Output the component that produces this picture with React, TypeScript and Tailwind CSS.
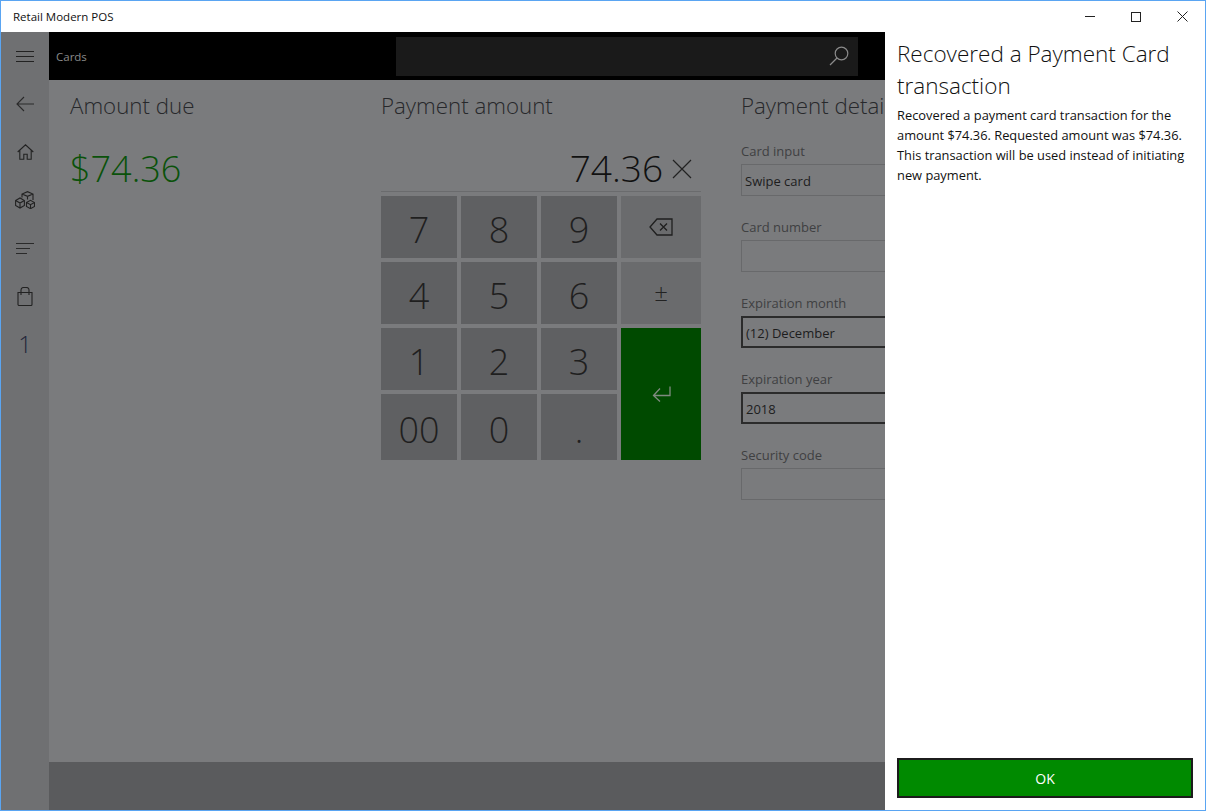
const FONT = "font-['Open_Sans','Noto_Sans',sans-serif]"

function HamburgerIcon() {
  return (
    <svg width="18" height="11" viewBox="0 0 18 11" fill="none" stroke="#222" strokeWidth="1">
      <path d="M0 0.500h18M0 5.500h18M0 10.500h18" />
    </svg>
  )
}

function BackIcon() {
  return (
    <svg width="18" height="16" viewBox="0 0 18 16" fill="none" stroke="#2a2a2a" strokeWidth="1.1">
      <path d="M18 8H1M8 1L1 8l7 7" />
    </svg>
  )
}

function HomeIcon() {
  return (
    <svg width="17" height="16" viewBox="0 0 17 16" fill="none" stroke="#222" strokeWidth="1.1">
      <path d="M0.700 8L8.500 0.800 16.300 8M2.800 6.300v9h4v-5h3.400v5h4v-9" />
    </svg>
  )
}

function BoxesIcon() {
  return (
    <svg width="20" height="18" viewBox="0 0 20 18" fill="none" stroke="#222" strokeWidth="1.1">
      {/* back cube */}
      <path d="M7 6.500V3l5.500-2.300L18 3v6M7 3l5.500 2.300L18 3M12.500 5.300V8.500" />
      {/* left cube */}
      <path d="M0.600 9.500L5 7l4.400 2.500v5L5 17l-4.400-2.500zM0.600 9.500L5 12l4.400-2.500M5 12v5" />
      {/* right cube */}
      <path d="M11.500 11.500l4-2.200 4 2.200v4l-4 2.200-4-2.200zM11.500 11.500l4 2.200 4-2.200M15.500 13.700v4" />
    </svg>
  )
}

function LinesIcon() {
  return (
    <svg width="18" height="11" viewBox="0 0 18 11" fill="none" stroke="#2a2a2a" strokeWidth="1">
      <path d="M0 0.500h18M0 5.500h14M0 10.500h11" />
    </svg>
  )
}

function BagIcon() {
  return (
    <svg width="16" height="19" viewBox="0 0 16 19" fill="none" stroke="#222" strokeWidth="1.1">
      <path d="M1 5.500h14v12a1 1 0 0 1-1 1H2a1 1 0 0 1-1-1zM4 8V3a2.500 2.500 0 0 1 2.500-2.500h3A2.500 2.500 0 0 1 12 3v5" />
    </svg>
  )
}

function SearchIcon() {
  return (
    <svg width="20" height="20" viewBox="0 0 20 20" fill="none" stroke="#8b8b8b" strokeWidth="1.2">
      <circle cx="12.500" cy="7.500" r="6.300" />
      <path d="M8 12L1 19" />
    </svg>
  )
}

function BackspaceIcon() {
  return (
    <svg width="24" height="18" viewBox="0 0 24 18" fill="none" stroke="#1f1f1f" strokeWidth="1.3">
      <path d="M23 1H8L1 9l7 8h15zM11 5.500l7 7M18 5.500l-7 7" />
    </svg>
  )
}

function EnterIcon() {
  return (
    <svg width="19" height="16" viewBox="0 0 19 16" fill="none" stroke="#7f8a7f" strokeWidth="1.3">
      <path d="M18 0.500V9.500H1.500M8 2.500L1.500 9.500 8 15.500" />
    </svg>
  )
}

function Field({ label, value, strong }: { label: string; value?: string; strong?: boolean }) {
  return (
    <div className="h-[76px] shrink-0">
      <div className="h-[24px] pt-[2px] text-[13px] leading-[18px] text-[#3f4042]">{label}</div>
      <div
        className={`flex h-[32px] w-[320px] items-center px-[3px] pt-[4px] text-[13px] text-[#1d1d1d] ${
          strong ? "border-2 border-[#2b2b2b]" : "border border-[#68696b]"
        }`}
      >
        {value}
      </div>
    </div>
  )
}

function Key({ label }: { label: string }) {
  return (
    <div className="flex items-center justify-center bg-[#5f6062] pt-[6px] text-[36px] font-light leading-none text-[#1f1f1f]">
      {label}
    </div>
  )
}

export default function App() {
  return (
    <div className={`${FONT} flex h-[811px] w-[1206px] flex-col overflow-hidden border border-[#5aa5f2] bg-white`}>
      {/* title bar */}
      <div className="flex h-[31px] shrink-0 items-center justify-between bg-white">
        <span className="pl-[12px] text-[11.500px] text-[#111]">Retail Modern POS</span>
        <div className="flex items-center">
          <div className="flex h-[31px] w-[46px] items-center justify-center">
            <div className="h-px w-[10px] bg-[#222]" />
          </div>
          <div className="flex h-[31px] w-[46px] items-center justify-center">
            <div className="h-[10px] w-[10px] border border-[#222]" />
          </div>
          <div className="flex h-[31px] w-[46px] items-center justify-center">
            <svg width="11" height="11" viewBox="0 0 11 11" stroke="#222" strokeWidth="1">
              <path d="M0.500 0.500l10 10M10.500 0.500l-10 10" />
            </svg>
          </div>
        </div>
      </div>

      <div className="flex min-h-0 flex-1">
        {/* nav rail */}
        <div className="flex w-[48px] shrink-0 flex-col items-center bg-[#6f7072]">
          <div className="flex h-[48px] items-center justify-center"><HamburgerIcon /></div>
          <div className="flex h-[48px] items-center justify-center"><BackIcon /></div>
          <div className="flex h-[48px] items-center justify-center"><HomeIcon /></div>
          <div className="flex h-[48px] items-center justify-center"><BoxesIcon /></div>
          <div className="flex h-[48px] items-center justify-center"><LinesIcon /></div>
          <div className="flex h-[48px] items-center justify-center"><BagIcon /></div>
          <div className="flex h-[48px] items-center justify-center text-[24px] font-light text-[#23263a]">1</div>
        </div>

        {/* main */}
        <div className="flex w-[836px] shrink-0 flex-col overflow-hidden bg-[#7a7b7d]">
          <div className="flex h-[48px] shrink-0 items-center bg-black">
            <span className="w-[347px] pl-[7px] pt-[2px] text-[11.500px] text-[#8a8a8a]">Cards</span>
            <div className="flex h-[39px] w-[462px] items-center justify-end bg-[#1a1a1a] pr-[9px]">
              <SearchIcon />
            </div>
          </div>

          <div className="flex min-h-0 flex-1 pl-[21px]">
            <div className="w-[311px] shrink-0">
              <div className="pt-[8px] text-[22.300px] font-light leading-[36px] text-[#27282b]">Amount due</div>
              <div className="pt-[20px] text-[36px] font-light leading-[50px] text-[#0a520a]">$74.36</div>
            </div>

            <div className="w-[360px] shrink-0">
              <div className="pt-[8px] text-[22.300px] font-light leading-[36px] text-[#27282b]">Payment amount</div>
              <div className="flex h-[68px] w-[320px] items-end justify-end border-b border-[#6a6b6d] pb-[2px] pr-[9px]">
                <span className="text-[37px] font-light leading-[42px] text-[#111]">74.36</span>
                <svg className="mb-[10px] ml-[9px]" width="20" height="20" viewBox="0 0 20 20" stroke="#222" strokeWidth="1.2">
                  <path d="M1 1l18 18M19 1L1 19" />
                </svg>
              </div>
              <div className="mt-[4px] grid w-[320px] grid-cols-[76px_76px_76px_80px] grid-rows-[62px_62px_62px_66px] gap-[4px]">
                <Key label="7" />
                <Key label="8" />
                <Key label="9" />
                <div className="flex items-center justify-center bg-[#6a6b6d]"><BackspaceIcon /></div>
                <Key label="4" />
                <Key label="5" />
                <Key label="6" />
                <div className="flex items-center justify-center bg-[#6a6b6d] pb-[2px] text-[24px] font-light leading-none text-[#222]">±</div>
                <Key label="1" />
                <Key label="2" />
                <Key label="3" />
                <div className="row-span-2 flex items-center justify-center bg-[#004a00]"><EnterIcon /></div>
                <Key label="00" />
                <Key label="0" />
                <Key label="." />
              </div>
            </div>

            <div className="shrink-0">
              <div className="pt-[8px] text-[22.300px] font-light leading-[36px] text-[#27282b] whitespace-nowrap">Payment details</div>
              <div className="flex flex-col pt-[16px]">
                <Field label="Card input" value="Swipe card" />
                <Field label="Card number" />
                <Field label="Expiration month" value="(12) December" strong />
                <Field label="Expiration year" value="2018" strong />
                <Field label="Security code" />
              </div>
            </div>
          </div>

          <div className="h-[48px] shrink-0 bg-[#5a5b5d]" />
        </div>

        {/* side panel */}
        <div className="flex min-w-0 flex-1 flex-col bg-white px-[12px] pb-[12px] pt-[6px]">
          <div className="text-[22.500px] font-light leading-[32px] text-[#111]">
            Recovered a Payment Card transaction
          </div>
          <p className="mt-[3px] text-[12.850px] leading-[20px] text-[#111]">
            Recovered a payment card transaction for the amount $74.36. Requested amount was $74.36. This transaction will be used instead of initiating new payment.
          </p>
          <div className="mt-auto flex h-[40px] items-center justify-center border-2 border-[#1c1c1c] bg-[#008a00] text-[14px] text-white">
            OK
          </div>
        </div>
      </div>
    </div>
  )
}
